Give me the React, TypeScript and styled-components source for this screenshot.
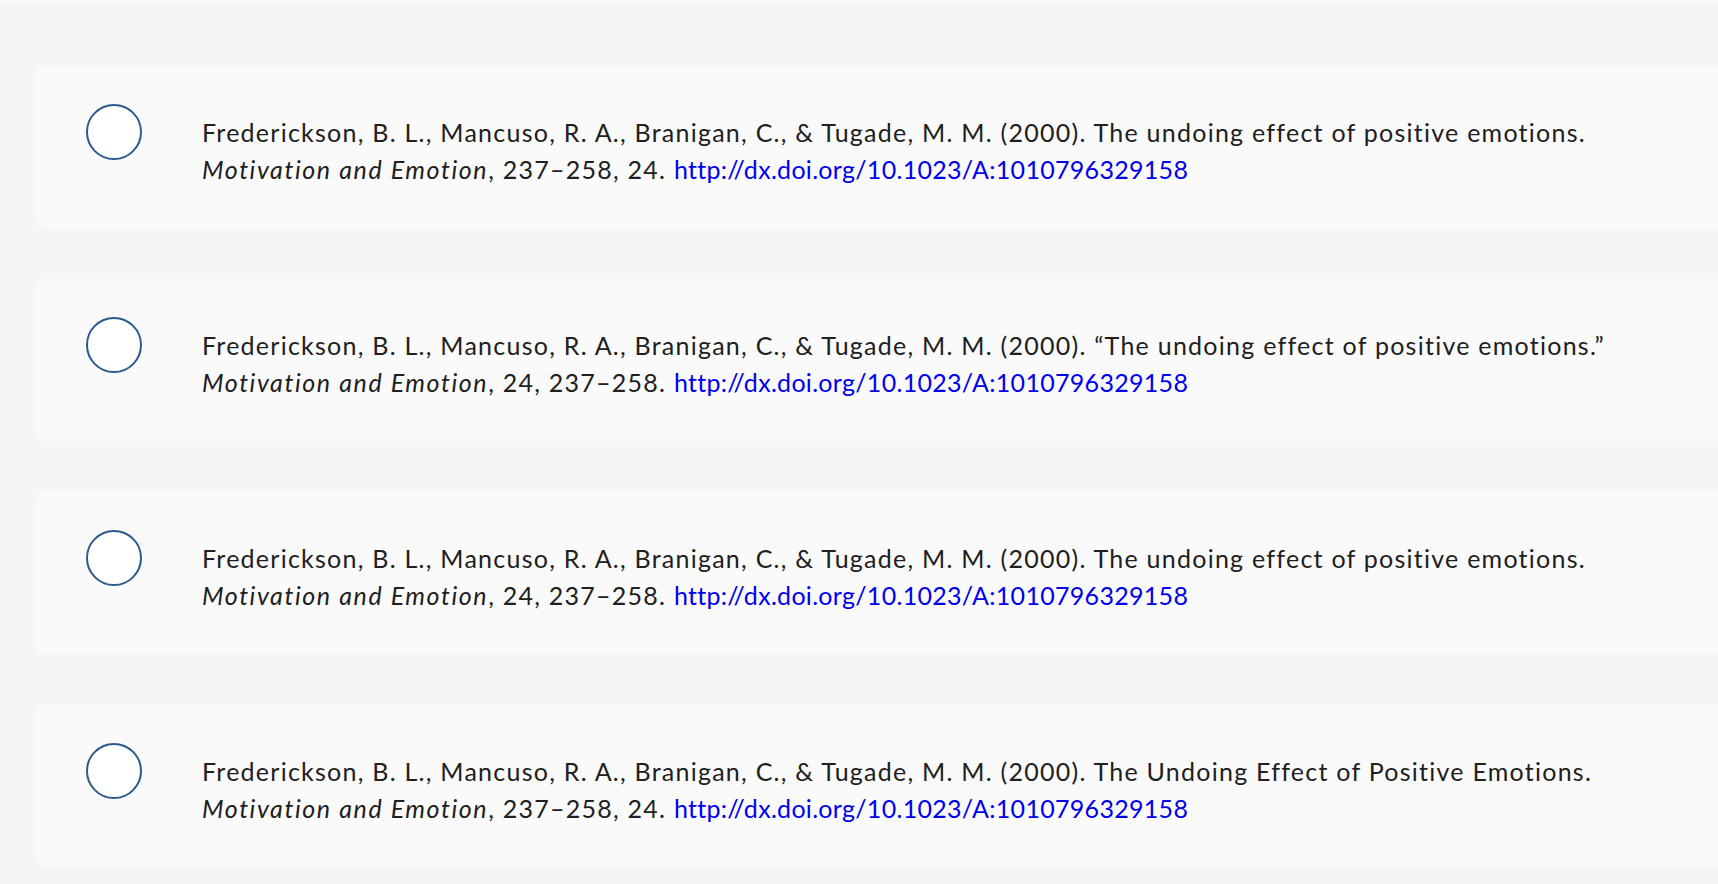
import React from "react";
import styled, { createGlobalStyle } from "styled-components";

const Global = createGlobalStyle`
  html, body { margin: 0; padding: 0; background: #f5f5f5; }
  body { font-family: "Lato", "Open Sans", sans-serif; }
`;

const Page = styled.div`
  min-height: 884px;
  box-sizing: border-box;
  border-top: 2px solid #fafafa;
  padding: 64px 0 0 36px;
  display: flex;
  flex-direction: column;
  gap: 51px;
  overflow: hidden;
`;

const Card = styled.label`
  display: flex;
  align-items: flex-start;
  gap: 60px;
  height: 162px;
  box-sizing: border-box;
  padding: 38px 0 0 50px;
  background: #fafafa;
  border-radius: 5px 0 0 5px;
  cursor: pointer;
`;

const Radio = styled.span`
  flex: none;
  width: 56px;
  height: 56px;
  box-sizing: border-box;
  border-radius: 50%;
  border: 2px solid #2c5a8f;
  background: #ffffff;
`;

const Citation = styled.div`
  margin-top: 10px;
  font-size: 25px;
  line-height: 37px;
  letter-spacing: 1.25px;
  color: #202020;
  white-space: nowrap;
`;

const Journal = styled.em`
  font-style: italic;
  letter-spacing: 1.6px;
`;

const Doi = styled.a`
  color: #0000ee;
  text-decoration: none;
  letter-spacing: 0.3px;
`;

type Item = { title: string; tail: string };

const items: Item[] = [
  { title: "The undoing effect of positive emotions.", tail: ", 237–258, 24. " },
  { title: "“The undoing effect of positive emotions.”", tail: ", 24, 237–258. " },
  { title: "The undoing effect of positive emotions.", tail: ", 24, 237–258. " },
  { title: "The Undoing Effect of Positive Emotions.", tail: ", 237–258, 24. " },
];

const url = "http://dx.doi.org/10.1023/A:1010796329158";

export default function App() {
  return (
    <>
      <Global />
      <Page>
        {items.map((it, i) => (
          <Card key={i}>
            <Radio />
            <Citation>
              Frederickson, B. L., Mancuso, R. A., Branigan, C., &amp; Tugade, M. M. (2000). {it.title}
              <br />
              <Journal>Motivation and Emotion</Journal>
              {it.tail}
              <Doi href={url}>{url}</Doi>
            </Citation>
          </Card>
        ))}
      </Page>
    </>
  );
}
